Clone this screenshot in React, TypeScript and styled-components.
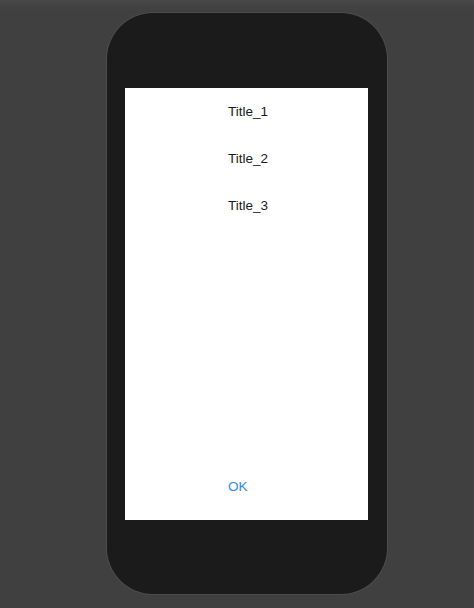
import React from 'react';
import styled, { createGlobalStyle } from 'styled-components';

const GlobalStyle = createGlobalStyle`
  html, body {
    margin: 0;
    padding: 0;
    background: #404040;
  }
  body {
    font-family: "Liberation Sans", Arial, sans-serif;
  }
`;

const Stage = styled.div`
  width: 474px;
  height: 608px;
  box-sizing: border-box;
  padding: 13px 0 0 107px;
  background: linear-gradient(#4a4a4a 0, #424242 6px, #404040 12px);
`;

const Device = styled.div`
  width: 280px;
  height: 581px;
  box-sizing: border-box;
  padding: 75px 19px 74px 18px;
  display: flex;
  background: #1b1b1b;
  border-radius: 46px;
  box-shadow: 0 0 0 1px #4c4c4c;
`;

const Screen = styled.div`
  flex: 1;
  display: flex;
  flex-direction: column;
  background: #ffffff;
  padding: 16px 0 25px 103px;
`;

const TitleList = styled.div`
  display: flex;
  flex-direction: column;
  gap: 31px;
`;

const Title = styled.div`
  font-size: 13.5px;
  line-height: 16px;
  color: #1a1a1a;
`;

const OkButton = styled.button`
  margin-top: auto;
  align-self: flex-start;
  padding: 0;
  border: none;
  background: none;
  font-family: inherit;
  font-size: 13.5px;
  line-height: 16px;
  color: #2f8ce6;
  cursor: pointer;
`;

const titles = ['Title_1', 'Title_2', 'Title_3'];

export default function App() {
  return (
    <>
      <GlobalStyle />
      <Stage>
        <Device>
          <Screen>
            <TitleList>
              {titles.map((t) => (
                <Title key={t}>{t}</Title>
              ))}
            </TitleList>
            <OkButton>OK</OkButton>
          </Screen>
        </Device>
      </Stage>
    </>
  );
}
